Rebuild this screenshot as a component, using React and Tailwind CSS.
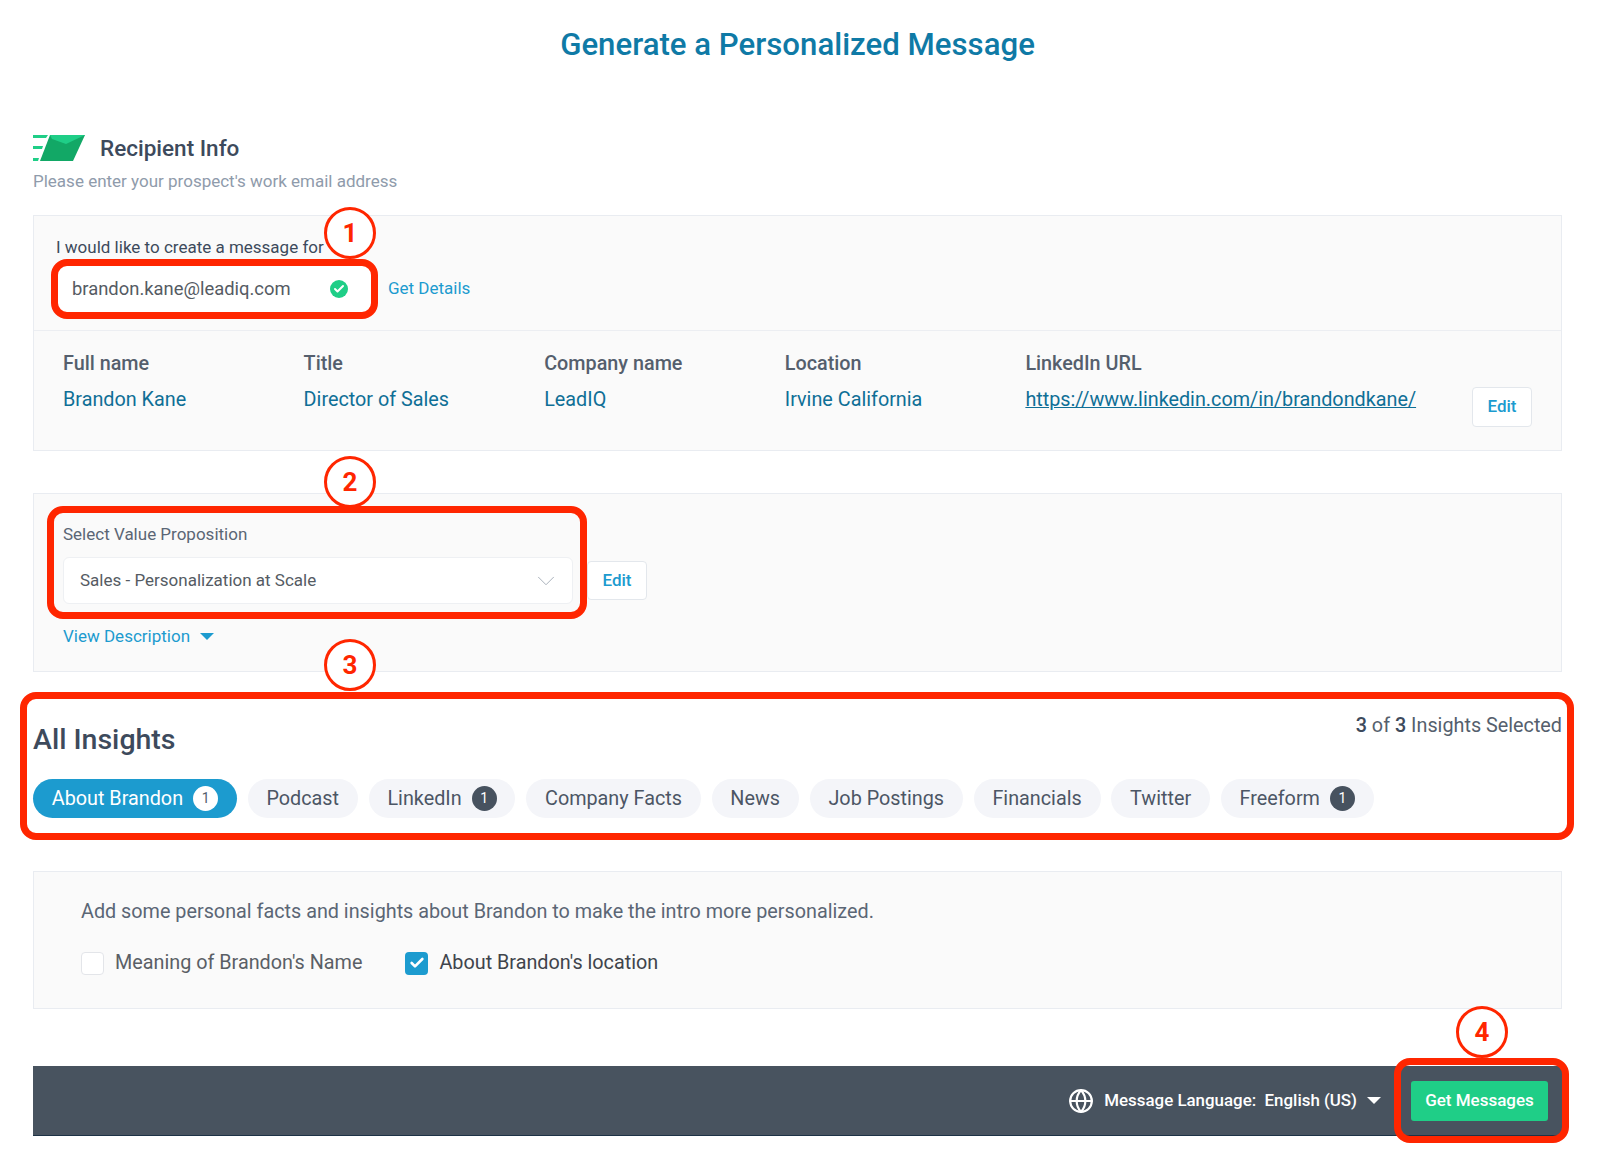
import { Globe, ChevronDown, Check } from 'lucide-react';

const tabs = [
    { name: 'About Brandon', count: 1, active: true },
    { name: 'Podcast' },
    { name: 'LinkedIn', count: 1 },
    { name: 'Company Facts' },
    { name: 'News' },
    { name: 'Job Postings' },
    { name: 'Financials' },
    { name: 'Twitter' },
    { name: 'Freeform', count: 1 },
];

const details = [
    { label: 'Full name', value: 'Brandon Kane' },
    { label: 'Title', value: 'Director of Sales' },
    { label: 'Company name', value: 'LeadIQ' },
    { label: 'Location', value: 'Irvine California' },
];

const Logo = () => (
    <svg width="52" height="27" viewBox="0 0 52 27" className="-mt-[2px]">
        <path d="M0 0h15l-2 3H0z M0 11h10l-1 3H0z M0 23h6l-1 3H0z" fill="#1fce87" />
        <path d="M17 0h35L40 26H7z" fill="#12a866" />
        <path d="M17 0h35L33 9 19 4z" fill="#1fce87" />
    </svg>
);

const Circle = ({ n, className }) => (
    <div className={`absolute flex h-[52px] w-[52px] items-center justify-center rounded-full border-[3px] border-[#ff2600] bg-white text-[26px] font-bold text-[#ff2600] ${className}`}>
        {n}
    </div>
);

export default function App() {
    return (
        <div className="relative h-[1166px] overflow-hidden bg-white pl-[33px] pr-[38px] font-['Roboto',sans-serif]">
            <h1 className="pt-[24px] text-center text-[31.2px] leading-[42px] font-medium text-[#0f7aa6]">Generate a Personalized Message</h1>

            <div className="mt-[69px] flex h-[28px] items-center gap-[15px]">
                <Logo />
                <span className="text-[22.5px] font-medium text-[#3d4a5c]">Recipient Info</span>
            </div>
            <p className="mt-[6px] text-[17px] leading-[24px] text-[#8f9bab]">Please enter your prospect's work email address</p>

            {/* recipient panel */}
            <div className="mt-[22px] h-[236px] border border-[#e9ecf1] bg-[#fafafa]">
                <div className="h-[115px] border-b border-[#eceef2] px-[22px] pt-[21px]">
                    <p className="text-[17px] leading-[20px] text-[#3d4a5c]">I would like to create a message for</p>
                    <div className="mt-[8px] flex items-center">
                        <div className="flex h-[47px] w-[316px] items-center justify-between rounded-[8px] bg-white pr-[24px] pl-[16px] text-[18.4px] text-[#555b63]">
                            brandon.kane@leadiq.com
                            <span className="flex h-[18px] w-[18px] items-center justify-center rounded-full bg-[#1fce87]">
                                <Check size={12} strokeWidth={4} color="white" />
                            </span>
                        </div>
                        <span className="ml-[16px] text-[17px] text-[#1c9bcf]">Get Details</span>
                    </div>
                </div>
                <div className="flex px-[29px] pt-[20px]">
                    {details.map((d) => (
                        <div key={d.label} className="w-[240.6px]">
                            <p className="text-[19.8px] leading-[26px] font-medium text-[#555f6d]">{d.label}</p>
                            <p className="mt-[10px] text-[19.8px] leading-[26px] text-[#0f6f96]">{d.value}</p>
                        </div>
                    ))}
                    <div>
                        <p className="text-[19.8px] leading-[26px] font-medium text-[#555f6d]">LinkedIn URL</p>
                        <p className="mt-[10px] text-[19.8px] leading-[26px] text-[#0f6f96] underline">https://www.linkedin.com/in/brandondkane/</p>
                    </div>
                    <button className="mt-[36px] ml-auto h-[40px] w-[60px] rounded-[4px] border border-[#e3e7ec] bg-white text-[17px] font-medium text-[#1c9bcf]">Edit</button>
                </div>
            </div>

            {/* value proposition panel */}
            <div className="mt-[42px] h-[179px] border border-[#e9ecf1] bg-[#fafafa] pt-[28px] pl-[29px]">
                <p className="text-[17px] leading-[24px] text-[#5b6675]">Select Value Proposition</p>
                <div className="mt-[11px] flex items-center">
                    <div className="flex h-[47px] w-[510px] items-center justify-between rounded-[6px] border border-[#eef0f3] bg-white pr-[11px] pl-[16px] text-[17px] text-[#555b63]">
                        Sales - Personalization at Scale
                        <ChevronDown size={30} strokeWidth={0.8} color="#aab2bc" />
                    </div>
                    <button className="ml-[14px] h-[39px] w-[60px] rounded-[4px] border border-[#e3e7ec] bg-white text-[17px] font-medium text-[#1c9bcf]">Edit</button>
                </div>
                <div className="mt-[20px] flex items-center gap-[10px] text-[17px] leading-[24px] text-[#1c9bcf]">
                    View Description
                    <span className="h-0 w-0 border-x-[7px] border-t-[7px] border-x-transparent border-t-[#1c9bcf]" />
                </div>
            </div>

            {/* insights */}
            <div className="mt-[24px] flex items-start justify-between">
                <h2 className="pt-[24px] text-[28.5px] leading-[40px] font-medium text-[#3d4a5c]">All Insights</h2>
                <p className="pt-[16px] text-[19.8px] leading-[28px] text-[#555f6d]"><b className="font-medium text-[#3d4a5c]">3</b> of <b className="font-medium text-[#3d4a5c]">3</b> Insights Selected</p>
            </div>
            <div className="mt-[19px] flex gap-[10.8px]">
                {tabs.map((t) => (
                    <div key={t.name} className={`flex h-[39px] items-center gap-[10px] rounded-full px-[18.8px] text-[19.8px] ${t.active ? 'bg-[#1c9bcf] text-white' : 'bg-[#f4f5f9] text-[#4c5665]'}`}>
                        {t.name}
                        {t.count && (
                            <span className={`flex h-[25px] w-[25px] items-center justify-center rounded-full text-[14px] ${t.active ? 'bg-white text-[#555f6d]' : 'bg-[#47525f] text-white'}`}>
                                {t.count}
                            </span>
                        )}
                    </div>
                ))}
            </div>

            {/* personal facts */}
            <div className="mt-[53px] h-[138px] border border-[#e9ecf1] bg-[#fafafa] pt-[26px] pl-[47px]">
                <p className="text-[19.8px] leading-[28px] text-[#5b6675]">Add some personal facts and insights about Brandon to make the intro more personalized.</p>
                <div className="mt-[25px] flex items-center text-[19.8px] leading-[24px]">
                    <span className="h-[23px] w-[23px] rounded-[4px] border border-[#e3e5e9] bg-white" />
                    <span className="ml-[11px] text-[#5a5f66]">Meaning of Brandon's Name</span>
                    <span className="ml-[43px] flex h-[23px] w-[23px] items-center justify-center rounded-[4px] bg-[#1c9bcf]">
                        <Check size={16} strokeWidth={4} color="white" />
                    </span>
                    <span className="ml-[11px] text-[#3f444b]">About Brandon's location</span>
                </div>
            </div>

            {/* bottom bar */}
            <div className="mt-[57px] flex h-[70px] items-center justify-end border-b border-[#1d3246] bg-[#48535f] pr-[14px]">
                <Globe size={26} strokeWidth={2} color="white" />
                <span className="ml-[10px] text-[16.9px] font-medium text-white">Message Language:&nbsp; English (US)</span>
                <span className="ml-[10px] h-0 w-0 border-x-[7px] border-t-[7px] border-x-transparent border-t-white" />
                <button className="ml-[30px] h-[40px] w-[137px] rounded-[3px] bg-[#1fce87] text-[17px] font-medium text-white">Get Messages</button>
            </div>

            {/* annotations */}
            <div className="absolute top-[259px] left-[51px] h-[60px] w-[327px] rounded-[16px] border-[7px] border-[#ff2600]" />
            <Circle n="1" className="top-[207px] left-[324px]" />
            <div className="absolute top-[506px] left-[47px] h-[113px] w-[540px] rounded-[16px] border-[7px] border-[#ff2600]" />
            <Circle n="2" className="top-[456px] left-[324px]" />
            <Circle n="3" className="top-[639px] left-[324px]" />
            <div className="absolute top-[692px] left-[20px] h-[148px] w-[1554px] rounded-[16px] border-[7px] border-[#ff2600]" />
            <Circle n="4" className="top-[1006px] left-[1456px]" />
            <div className="absolute top-[1058px] left-[1394px] h-[85px] w-[175px] rounded-[16px] border-[7px] border-[#ff2600]" />
        </div>
    );
}
